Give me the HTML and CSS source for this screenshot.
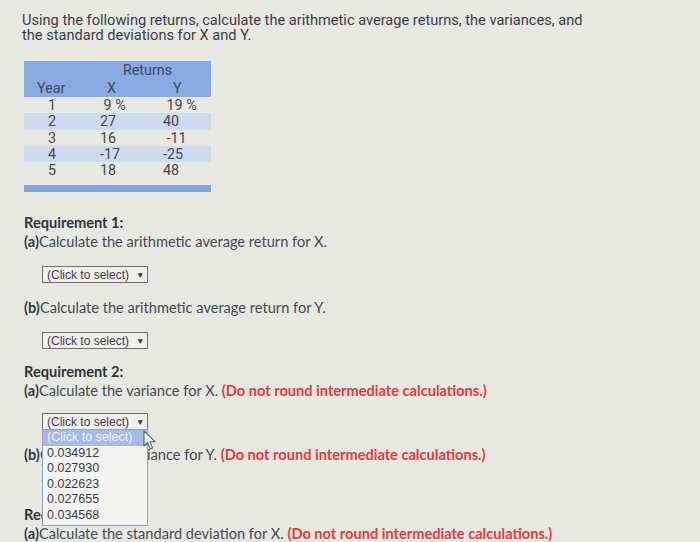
FILE: index.html
```html
<!DOCTYPE html>
<html>
<head>
<meta charset="utf-8">
<link rel="stylesheet" href="styles.css">
</head>
<body>
<div class="page">
  <p class="intro">Using the following returns, calculate the arithmetic average returns, the variances, and the standard deviations for X and Y.</p>

  <div class="table-wrap">
    <table class="returns">
      <colgroup><col class="col-year"><col class="col-x"><col class="col-y"></colgroup>
      <thead>
        <tr><th></th><th colspan="2" class="ret">Returns</th></tr>
        <tr><th class="h-year">Year</th><th class="h-x">X</th><th class="h-y">Y</th></tr>
      </thead>
      <tbody>
        <tr><td class="c-year">1</td><td class="c-x">&nbsp;9 %</td><td class="c-y">&nbsp;19 %</td></tr>
        <tr class="band"><td class="c-year">2</td><td class="c-x">27</td><td class="c-y">40</td></tr>
        <tr><td class="c-year">3</td><td class="c-x">16</td><td class="c-y">&nbsp;-11</td></tr>
        <tr class="band"><td class="c-year">4</td><td class="c-x">-17</td><td class="c-y">-25</td></tr>
        <tr><td class="c-year">5</td><td class="c-x">18</td><td class="c-y">48</td></tr>
      </tbody>
    </table>
    <div class="table-bar"></div>
  </div>

  <section class="req req1">
    <h2 class="req-title">Requirement 1:</h2>
    <p class="q"><b>(a)</b>Calculate the arithmetic average return for X.</p>
    <div class="select-row"><div class="select"><span>(Click to select)</span><span class="arrow">&#9660;</span></div></div>
    <p class="q q-b"><b>(b)</b>Calculate the arithmetic average return for Y.</p>
    <div class="select-row"><div class="select"><span>(Click to select)</span><span class="arrow">&#9660;</span></div></div>
  </section>

  <section class="req req2">
    <h2 class="req-title">Requirement 2:</h2>
    <p class="q"><b>(a)</b>Calculate the variance for X. <span class="warn">(Do not round intermediate calculations.)</span></p>
    <div class="select-row tight">
      <div class="select open"><span>(Click to select)</span><span class="arrow">&#9660;</span>
        <ul class="options">
          <li class="hl">(Click to select)</li>
          <li>0.034912</li>
          <li>0.027930</li>
          <li>0.022623</li>
          <li>0.027655</li>
          <li>0.034568</li>
        </ul>
        <svg class="cursor" width="14" height="21" viewBox="0 0 14 21"><path d="M1 1 L1 16 L4.5 12.5 L7.3 19 L9.6 18 L6.9 11.7 L12 11.7 Z" fill="#fafafa" stroke="#5a6270" stroke-width="1.1" stroke-linejoin="round"/></svg>
      </div>
    </div>
    <p class="q q-b"><b>(b)</b>Calculate the variance for Y. <span class="warn">(Do not round intermediate calculations.)</span></p>
    <div class="select-row"><div class="select"><span>(Click to select)</span><span class="arrow">&#9660;</span></div></div>
  </section>

  <section class="req req3">
    <h2 class="req-title">Requirement 3:</h2>
    <p class="q"><b>(a)</b>Calculate the standard deviation for X. <span class="warn">(Do not round intermediate calculations.)</span></p>
  </section>
</div>
</body>
</html>
```

FILE: styles.css
```css
html, body {
  margin: 0;
  padding: 0;
}
body {
  background: #e8e8e3;
  color: #3b3f47;
  width: 700px;
  height: 542px;
  overflow: hidden;
}
.page {
  padding: 13px 0 0 22px;
}
.intro {
  margin: 0;
  width: 572px;
  font-family: Roboto, "Liberation Sans", sans-serif;
  font-size: 14.6px;
  line-height: 15px;
  color: #3a3e48;
}
.table-wrap {
  margin: 18px 0 0 2px;
  width: 187px;
}
.returns {
  width: 187px;
  table-layout: fixed;
  border-collapse: collapse;
  font-family: Roboto, "Liberation Sans", sans-serif;
  font-size: 14.3px;
  color: #454952;
}
.col-year { width: 56px; }
.col-x { width: 66px; }
.col-y { width: 65px; }
.returns th, .returns td {
  padding: 0;
  font-weight: normal;
  white-space: nowrap;
}
.returns thead tr {
  background: #88a9e1;
  height: 18px;
  color: #3e4b60;
}
.returns thead th {
  line-height: 18px;
  vertical-align: bottom;
  text-align: left;
}
.returns th.ret {
  text-align: center;
  padding-left: 4px;
}
.returns th.h-year { padding-left: 13px; }
.returns th.h-x { padding-left: 27px; }
.returns th.h-y { padding-left: 27px; }
.returns tbody tr {
  height: 16.3px;
  line-height: 16px;
}
.returns tbody tr.band {
  background: #cfdaee;
}
.c-year {
  text-align: center;
}
.c-x {
  text-align: left;
  padding-left: 20px !important;
}
.c-y {
  text-align: left;
  padding-left: 17px !important;
}
.table-bar {
  margin-top: 7px;
  height: 7px;
  background: #84a5dc;
}
.req {
  padding-left: 2px;
  font-family: Lato, "Open Sans", sans-serif;
}
.req1 { margin-top: 21px; }
.req2 { margin-top: 12px; }
.req3 { margin-top: 8px; }
.req-title {
  margin: 0;
  font-size: 14.6px;
  font-weight: bold;
  line-height: 19px;
  color: #2f333b;
}
.q {
  margin: 0;
  font-size: 14.6px;
  line-height: 19px;
  color: #444a55;
}
.q b {
  color: #333845;
}
.q-b { margin-top: 14px; }
.warn {
  color: #e63b3b;
  font-weight: bold;
}
.select-row {
  padding-left: 18px;
  margin-top: 15px;
  height: 18px;
}
.select-row.tight { margin-top: 13px; }
.select {
  position: relative;
  box-sizing: border-box;
  width: 106px;
  height: 17px;
  border: 1px solid #707070;
  background: #efefec;
  display: flex;
  align-items: center;
  gap: 7px;
  padding-left: 4px;
  font-family: "Liberation Sans", Arial, sans-serif;
  font-size: 12px;
  color: #3c404a;
}
.select .arrow {
  font-size: 8.5px;
  color: #3a3d45;
}
.select.open {
  border-bottom-color: #8aa0c8;
}
.options {
  position: absolute;
  left: -1px;
  top: 15px;
  width: 106px;
  box-sizing: border-box;
  margin: 0;
  padding: 0 0 2px 0;
  list-style: none;
  background: #f3f3f0;
  border: 1px solid #8ea2c6;
  z-index: 2;
}
.options li {
  height: 15.5px;
  line-height: 15.5px;
  padding-left: 4px;
  font-size: 12.5px;
  color: #3a3e47;
}
.options li.hl {
  background: #a6bbe6;
  color: #eef1f8;
}
.cursor {
  position: absolute;
  left: 100px;
  top: 16px;
  z-index: 3;
}
```
